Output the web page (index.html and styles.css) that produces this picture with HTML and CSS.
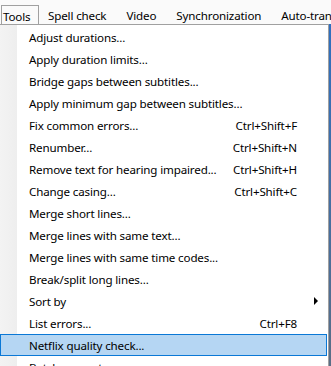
FILE: index.html
```html
<!DOCTYPE html>
<html>
<head>
<meta charset="utf-8">
<link rel="stylesheet" href="styles.css">
</head>
<body>
<div class="screen">
  <div class="menubar">
    <div class="top-item open">Tools</div>
    <div class="top-item">Spell check</div>
    <div class="top-item">Video</div>
    <div class="top-item">Synchronization</div>
    <div class="top-item">Auto-translate</div>
  </div>
  <div class="below">
    <div class="dropdown">
      <div class="row"><span class="label">Adjust durations...</span></div>
      <div class="row"><span class="label">Apply duration limits...</span></div>
      <div class="row"><span class="label">Bridge gaps between subtitles...</span></div>
      <div class="row"><span class="label">Apply minimum gap between subtitles...</span></div>
      <div class="row"><span class="label">Fix common errors...</span><span class="key">Ctrl+Shift+F</span></div>
      <div class="row"><span class="label">Renumber...</span><span class="key">Ctrl+Shift+N</span></div>
      <div class="row"><span class="label">Remove text for hearing impaired...</span><span class="key">Ctrl+Shift+H</span></div>
      <div class="row"><span class="label">Change casing...</span><span class="key">Ctrl+Shift+C</span></div>
      <div class="row"><span class="label">Merge short lines...</span></div>
      <div class="row"><span class="label">Merge lines with same text...</span></div>
      <div class="row"><span class="label">Merge lines with same time codes...</span></div>
      <div class="row"><span class="label">Break/split long lines...</span></div>
      <div class="row"><span class="label">Sort by</span><span class="sub"><span class="arrow"></span></span></div>
      <div class="row"><span class="label">List errors...</span><span class="key">Ctrl+F8</span></div>
      <div class="row selected"><span class="label">Netflix quality check...</span></div>
      <div class="row"><span class="label">Batch convert...</span></div>
    </div>
    <div class="edge"></div>
  </div>
</div>
</body>
</html>
```
FILE: styles.css
```css
html, body {
  margin: 0;
  padding: 0;
}
body {
  width: 331px;
  height: 366px;
  overflow: hidden;
  background: #ffffff;
  font-family: "Noto Sans", "Open Sans", sans-serif;
  font-size: 11.6px;
  letter-spacing: -0.15px;
  color: #000;
}
.screen {
  width: 331px;
  height: 366px;
  overflow: hidden;
}
.menubar {
  display: flex;
  height: 24px;
  background: #fafafa;
  white-space: nowrap;
  overflow: hidden;
}
.top-item {
  flex: none;
  padding: 0 10px;
  line-height: 31px;
  height: 24px;
  box-sizing: border-box;
}
.top-item.open {
  margin-left: 1px;
  margin-top: 5px;
  width: 38px;
  height: 19px;
  line-height: 21px;
  padding: 0 0 0 1px;
  border: 1px solid #a0a0a0;
  border-bottom: none;
  background: #fafafa;
  position: relative;
  z-index: 2;
}
.top-item.open::after {
  content: "";
  position: absolute;
  left: 0;
  right: 0;
  bottom: -1px;
  height: 1px;
  background: #f5f5f5;
}
.top-item.open + .top-item {
  padding-left: 9px;
}
.below {
  display: flex;
  height: 342px;
}
.dropdown {
  width: 328px;
  border-top: 1px solid #a0a0a0;
  border-right: 1px solid #a0a0a0;
  padding-top: 1px;
  background: linear-gradient(to right, #f3f3f3 0, #eeeeee 17px, #ffffff 17px);
  overflow: hidden;
}
.edge {
  width: 2px;
  background: linear-gradient(to bottom, #2f6fbf, #5a6e86);
}
.row {
  display: flex;
  align-items: center;
  height: 22px;
  margin-right: 1px;
  padding-left: 29px;
  padding-right: 30px;
  box-sizing: border-box;
  white-space: nowrap;
}
.label {
  flex: 1;
}
.key {
  flex: none;
  text-align: right;
}
.sub {
  flex: none;
  display: flex;
  align-items: center;
  margin-right: -30px;
  width: 30px;
  height: 22px;
}
.arrow {
  display: block;
  margin-left: 17px;
  width: 0;
  height: 0;
  border-left: 4px solid #000;
  border-top: 4px solid transparent;
  border-bottom: 4px solid transparent;
}
.row.selected {
  background: #b5d6f3;
  border: 1px solid #0a78d6;
  padding-left: 28px;
}
```
